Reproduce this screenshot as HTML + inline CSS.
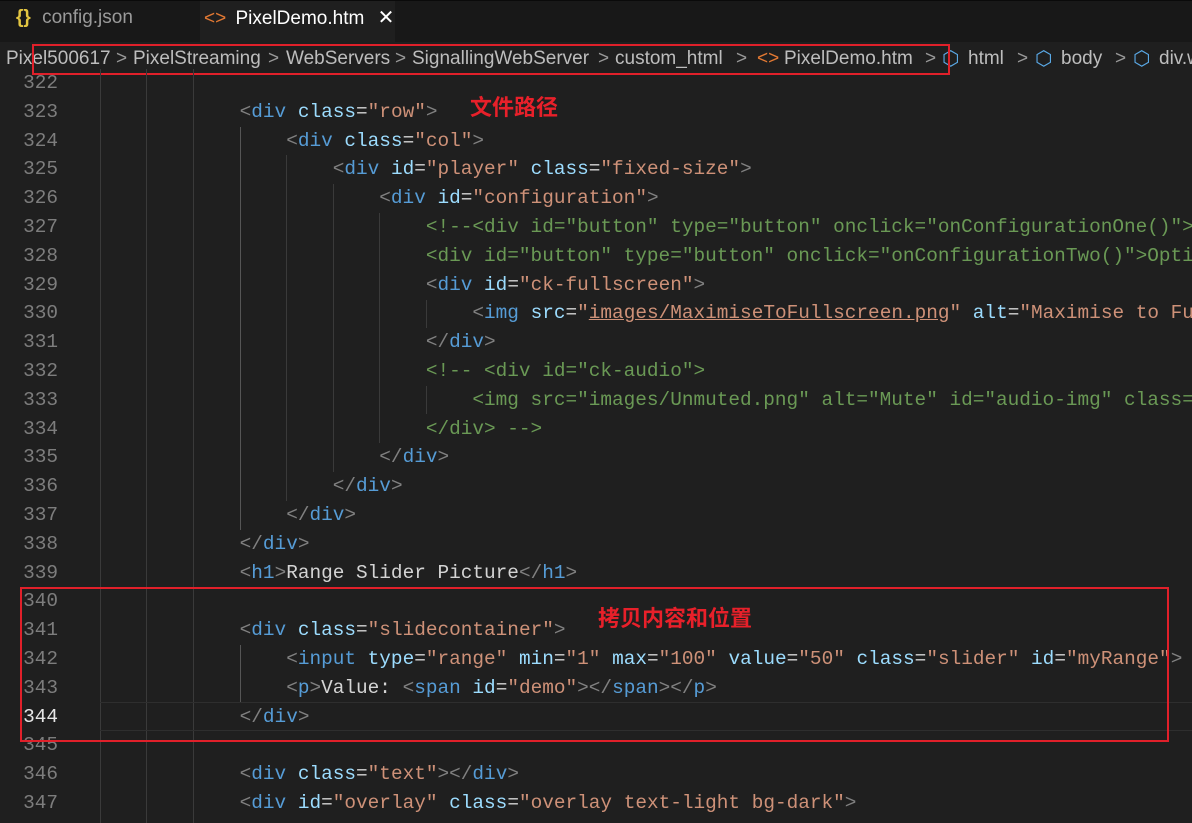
<!DOCTYPE html>
<html><head><meta charset="utf-8"><style>
*{margin:0;padding:0;box-sizing:border-box}
body{width:1192px;height:823px;background:#1f1f1f;overflow:hidden;position:relative;font-family:"Liberation Sans",sans-serif}
.tabs{position:absolute;left:0;top:0;width:1192px;height:42px;background:#181818;border-top:1px solid #0a0a0a}
.tab{position:absolute;top:0;height:42px;font-size:19px;line-height:34px;color:#9a9a9a}
.bc{position:absolute;left:0;top:42px;width:1192px;height:34px;background:#1f1f1f;font-size:19px;color:#bdbdbd;line-height:34px;white-space:nowrap}
.bc span{position:absolute;top:0}
.ch{color:#999}
.ic{color:#5aa9e6;font-size:20px}
.ln{position:absolute;left:0;width:58px;text-align:right;font-family:"Liberation Mono",monospace;font-size:19.4px;color:#7d7d7d;line-height:28.8px}
.code{position:absolute;left:100px;font-family:"Liberation Mono",monospace;font-size:19.4px;line-height:28.8px;white-space:pre;color:#d4d4d4}
.p{color:#808080}.t{color:#569cd6}.a{color:#9cdcfe}.s{color:#ce9178}.c{color:#6a9955}
.g{position:absolute;width:1px;background:#3a3a3a}
.red{position:absolute;border:2px solid #e0202a}
.lbl{position:absolute;font-family:"Liberation Sans","Noto Sans CJK SC",sans-serif;font-weight:bold;font-size:22px;color:#e8202a}
</style></head><body>
<div class="tabs">
 <div class="tab" style="left:0;width:200px;"><span style="color:#e2c541;margin-left:16px;font-weight:bold">{}</span> <span style="margin-left:6px">config.json</span></div>
 <div class="tab" style="left:200px;width:195px;background:#1f1f1f;height:41px;color:#fff"><span style="color:#e37933;margin-left:4px">&lt;&gt;</span> <span style="margin-left:4px">PixelDemo.htm</span> <span style="margin-left:8px;font-size:20px">✕</span></div>
</div>
<div class="bc">
<span style="left:6px">Pixel500617</span><span class="ch" style="left:116px">&gt;</span>
<span style="left:133px">PixelStreaming</span><span class="ch" style="left:268px">&gt;</span>
<span style="left:286px">WebServers</span><span class="ch" style="left:395px">&gt;</span>
<span style="left:412px">SignallingWebServer</span><span class="ch" style="left:598px">&gt;</span>
<span style="left:615px">custom_html</span><span class="ch" style="left:736px">&gt;</span>
<span style="left:757px;color:#e37933">&lt;&gt;</span>
<span style="left:784px">PixelDemo.htm</span><span class="ch" style="left:925px">&gt;</span>
<span class="ic" style="left:942px">⬡</span><span style="left:968px">html</span><span class="ch" style="left:1017px">&gt;</span>
<span class="ic" style="left:1035px">⬡</span><span style="left:1061px">body</span><span class="ch" style="left:1115px">&gt;</span>
<span class="ic" style="left:1133px">⬡</span><span style="left:1159px">div.w</span>
</div>
<div class="red" style="left:32px;top:44px;width:918px;height:31px"></div>

<div class="g" style="left:100px;top:69px;height:754px"></div>
<div class="g" style="left:146px;top:69px;height:754px"></div>
<div class="g" style="left:193px;top:69px;height:754px"></div>
<div class="g" style="left:240px;top:127px;height:403px;background:#555"></div>
<div class="g" style="left:286px;top:155px;height:346px"></div>
<div class="g" style="left:333px;top:184px;height:288px"></div>
<div class="g" style="left:379px;top:213px;height:230px"></div>
<div class="g" style="left:426px;top:300px;height:28px"></div>
<div class="g" style="left:426px;top:386px;height:28px"></div>
<div class="g" style="left:240px;top:645px;height:57px;background:#555"></div>
<div style="position:absolute;left:100px;top:702px;width:1092px;height:29px;border-top:1px solid #2e2e2e;border-bottom:1px solid #2e2e2e"></div>

<div class="ln" style="top:69px">322<br>323<br>324<br>325<br>326<br>327<br>328<br>329<br>330<br>331<br>332<br>333<br>334<br>335<br>336<br>337<br>338<br>339<br>340<br>341<br>342<br>343<br><span style="color:#e6e6e6">344</span><br>345<br>346<br>347</div>
<div class="code" style="top:69px">
            <span class="p">&lt;</span><span class="t">div</span> <span class="a">class</span>=<span class="s">"row"</span><span class="p">&gt;</span>
                <span class="p">&lt;</span><span class="t">div</span> <span class="a">class</span>=<span class="s">"col"</span><span class="p">&gt;</span>
                    <span class="p">&lt;</span><span class="t">div</span> <span class="a">id</span>=<span class="s">"player"</span> <span class="a">class</span>=<span class="s">"fixed-size"</span><span class="p">&gt;</span>
                        <span class="p">&lt;</span><span class="t">div</span> <span class="a">id</span>=<span class="s">"configuration"</span><span class="p">&gt;</span>
                            <span class="c">&lt;!--&lt;div id="button" type="button" onclick="onConfigurationOne()"&gt;</span>
                            <span class="c">&lt;div id="button" type="button" onclick="onConfigurationTwo()"&gt;Opti</span>
                            <span class="p">&lt;</span><span class="t">div</span> <span class="a">id</span>=<span class="s">"ck-fullscreen"</span><span class="p">&gt;</span>
                                <span class="p">&lt;</span><span class="t">img</span> <span class="a">src</span>=<span class="s">"<u>images/MaximiseToFullscreen.png</u>"</span> <span class="a">alt</span>=<span class="s">"Maximise to Fu</span>
                            <span class="p">&lt;/</span><span class="t">div</span><span class="p">&gt;</span>
                            <span class="c">&lt;!-- &lt;div id="ck-audio"&gt;</span>
                                <span class="c">&lt;img src="images/Unmuted.png" alt="Mute" id="audio-img" class=</span>
                            <span class="c">&lt;/div&gt; --&gt;</span>
                        <span class="p">&lt;/</span><span class="t">div</span><span class="p">&gt;</span>
                    <span class="p">&lt;/</span><span class="t">div</span><span class="p">&gt;</span>
                <span class="p">&lt;/</span><span class="t">div</span><span class="p">&gt;</span>
            <span class="p">&lt;/</span><span class="t">div</span><span class="p">&gt;</span>
            <span class="p">&lt;</span><span class="t">h1</span><span class="p">&gt;</span>Range Slider Picture<span class="p">&lt;/</span><span class="t">h1</span><span class="p">&gt;</span>

            <span class="p">&lt;</span><span class="t">div</span> <span class="a">class</span>=<span class="s">"slidecontainer"</span><span class="p">&gt;</span>
                <span class="p">&lt;</span><span class="t">input</span> <span class="a">type</span>=<span class="s">"range"</span> <span class="a">min</span>=<span class="s">"1"</span> <span class="a">max</span>=<span class="s">"100"</span> <span class="a">value</span>=<span class="s">"50"</span> <span class="a">class</span>=<span class="s">"slider"</span> <span class="a">id</span>=<span class="s">"myRange"</span><span class="p">&gt;</span>
                <span class="p">&lt;</span><span class="t">p</span><span class="p">&gt;</span>Value: <span class="p">&lt;</span><span class="t">span</span> <span class="a">id</span>=<span class="s">"demo"</span><span class="p">&gt;&lt;/</span><span class="t">span</span><span class="p">&gt;&lt;/</span><span class="t">p</span><span class="p">&gt;</span>
            <span class="p">&lt;/</span><span class="t">div</span><span class="p">&gt;</span>

            <span class="p">&lt;</span><span class="t">div</span> <span class="a">class</span>=<span class="s">"text"</span><span class="p">&gt;&lt;/</span><span class="t">div</span><span class="p">&gt;</span>
            <span class="p">&lt;</span><span class="t">div</span> <span class="a">id</span>=<span class="s">"overlay"</span> <span class="a">class</span>=<span class="s">"overlay text-light bg-dark"</span><span class="p">&gt;</span></div>

<div class="red" style="left:20px;top:587px;width:1149px;height:155px"></div>
<div class="lbl" style="left:470px;top:90px">文件路径</div>
<div class="lbl" style="left:598px;top:601px">拷贝内容和位置</div>
</body></html>
